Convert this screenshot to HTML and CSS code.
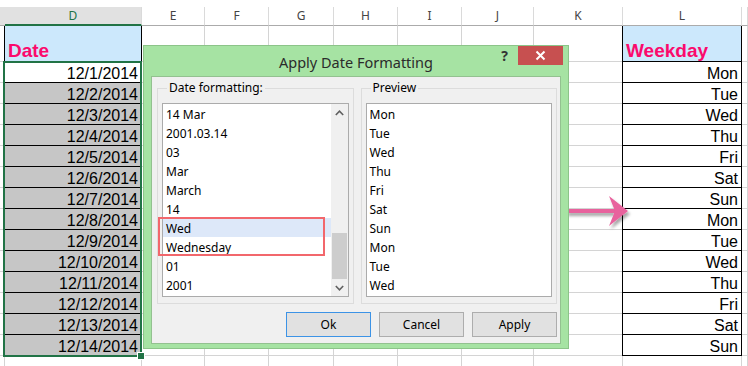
FILE: index.html
```html
<!DOCTYPE html>
<html>
<head>
<meta charset="utf-8">
<link rel="stylesheet" href="styles.css">
</head>
<body>
<div class="sheet">
  <div class="topstrip"></div>
  <div class="grid">
    <div class="col c-a"><div class="hd sel-corner"></div><div class="r1"></div><div class="rows"></div></div>
    <div class="col c-d">
      <div class="hd sel">D</div>
      <div class="head-cell">Date</div>
      <div class="cell white">12/1/2014</div>
      <div class="cell">12/2/2014</div>
      <div class="cell">12/3/2014</div>
      <div class="cell">12/4/2014</div>
      <div class="cell">12/5/2014</div>
      <div class="cell">12/6/2014</div>
      <div class="cell">12/7/2014</div>
      <div class="cell">12/8/2014</div>
      <div class="cell">12/9/2014</div>
      <div class="cell">12/10/2014</div>
      <div class="cell">12/11/2014</div>
      <div class="cell">12/12/2014</div>
      <div class="cell">12/13/2014</div>
      <div class="cell">12/14/2014</div>
      <div class="rows"></div>
    </div>
    <div class="col c-e"><div class="hd">E</div><div class="r1"></div><div class="rows"></div></div>
    <div class="col c-f"><div class="hd">F</div><div class="r1"></div><div class="rows"></div></div>
    <div class="col c-g"><div class="hd">G</div><div class="r1"></div><div class="rows"></div></div>
    <div class="col c-h"><div class="hd">H</div><div class="r1"></div><div class="rows"></div></div>
    <div class="col c-i"><div class="hd">I</div><div class="r1"></div><div class="rows"></div></div>
    <div class="col c-j"><div class="hd">J</div><div class="r1"></div><div class="rows"></div></div>
    <div class="col c-k"><div class="hd">K</div><div class="r1"></div><div class="rows"></div></div>
    <div class="col c-l">
      <div class="hd">L</div>
      <div class="head-cell">Weekday</div>
      <div class="cell white">Mon</div>
      <div class="cell white">Tue</div>
      <div class="cell white">Wed</div>
      <div class="cell white">Thu</div>
      <div class="cell white">Fri</div>
      <div class="cell white">Sat</div>
      <div class="cell white">Sun</div>
      <div class="cell white">Mon</div>
      <div class="cell white">Tue</div>
      <div class="cell white">Wed</div>
      <div class="cell white">Thu</div>
      <div class="cell white">Fri</div>
      <div class="cell white">Sat</div>
      <div class="cell white">Sun</div>
      <div class="rows"></div>
    </div>
    <div class="col c-m"><div class="hd"></div><div class="r1"></div><div class="rows"></div></div>
  </div>

  <div class="selection"><span class="handle"></span></div>

  <svg class="arrow" width="80" height="45" viewBox="0 0 80 45">
    <defs>
      <filter id="shadow" x="-20%" y="-40%" width="150%" height="190%">
        <feDropShadow dx="2" dy="3" stdDeviation="1.6" flood-color="#000" flood-opacity="0.35"/>
      </filter>
    </defs>
    <g filter="url(#shadow)" fill="#e8629d">
      <rect x="6" y="19" width="50" height="4"/>
      <polygon points="49,6 68,21 49,36 55,21"/>
    </g>
  </svg>

  <div class="dialog">
    <div class="titlebar">
      <div class="title">Apply Date Formatting</div>
      <div class="controls">
        <span class="help">?</span>
        <span class="close">
          <svg width="11" height="11" viewBox="0 0 11 11"><path d="M1.5 1.5 L9.5 9.5 M9.5 1.5 L1.5 9.5" stroke="#fff" stroke-width="2" fill="none"/></svg>
        </span>
      </div>
    </div>
    <div class="client">
      <div class="groups">
        <fieldset class="group">
          <legend>Date formatting:</legend>
          <div class="listbox">
            <ul class="items">
              <li>14 Mar</li>
              <li>2001.03.14</li>
              <li>03</li>
              <li>Mar</li>
              <li>March</li>
              <li>14</li>
              <li class="selected">Wed</li>
              <li>Wednesday</li>
              <li>01</li>
              <li>2001</li>
            </ul>
            <div class="scrollbar">
              <div class="sb-btn"><svg width="9" height="6" viewBox="0 0 9 6"><polyline points="0.8,5 4.5,1.2 8.2,5" fill="none" stroke="#606060" stroke-width="1.6"/></svg></div>
              <div class="sb-track"><div class="sb-thumb"></div></div>
              <div class="sb-btn"><svg width="9" height="6" viewBox="0 0 9 6"><polyline points="0.8,1 4.5,4.8 8.2,1" fill="none" stroke="#606060" stroke-width="1.6"/></svg></div>
            </div>
            <div class="mark"></div>
          </div>
        </fieldset>
        <fieldset class="group">
          <legend>Preview</legend>
          <div class="listbox">
            <ul class="items">
              <li>Mon</li>
              <li>Tue</li>
              <li>Wed</li>
              <li>Thu</li>
              <li>Fri</li>
              <li>Sat</li>
              <li>Sun</li>
              <li>Mon</li>
              <li>Tue</li>
              <li>Wed</li>
            </ul>
          </div>
        </fieldset>
      </div>
      <div class="buttons">
        <button class="btn default">Ok</button>
        <button class="btn">Cancel</button>
        <button class="btn">Apply</button>
      </div>
    </div>
  </div>
</div>
</body>
</html>
```
FILE: styles.css
```css
* { box-sizing: border-box; }

body {
  margin: 0;
  background: #fff;
  font-family: "Noto Sans", "DejaVu Sans", sans-serif;
}

.sheet {
  position: relative;
  width: 748px;
  height: 366px;
  overflow: hidden;
  background: #fff;
}

.topstrip { height: 7px; }

.grid {
  display: flex;
  height: 359px;
}

.col {
  display: flex;
  flex-direction: column;
  flex: none;
}

.c-a { width: 5px; }
.c-d { width: 137px; }
.c-e { width: 63px; }
.c-f { width: 64px; }
.c-g { width: 65px; }
.c-h { width: 64px; }
.c-i { width: 64px; }
.c-j { width: 72px; }
.c-k { width: 89px; }
.c-l { width: 119px; }
.c-m { flex: 1; }

.hd {
  height: 19px;
  flex: none;
  border-right: 1px solid #dadada;
  border-bottom: 1px solid #ababab;
  font-size: 12px;
  line-height: 18px;
  color: #444;
  text-align: center;
}

.hd.sel {
  background: #e1e1e1;
  color: #217346;
  border-bottom: 2px solid #217346;
}

.hd.sel-corner {
  background: #e1e1e1;
  border-right: none;
}

.r1 {
  height: 36px;
  flex: none;
  border-right: 1px solid #d4d4d4;
  border-bottom: 1px solid #d4d4d4;
}

.rows {
  flex: 1;
  border-right: 1px solid #d4d4d4;
  background: repeating-linear-gradient(to bottom, transparent 0 20px, #d4d4d4 20px 21px);
}

.head-cell {
  height: 36px;
  flex: none;
  margin-left: -1px;
  border: 1px solid #000;
  border-top: none;
  background: #cce8fc;
  color: #fb0a6c;
  font-family: "Liberation Sans", Arial, sans-serif;
  font-weight: bold;
  font-size: 19px;
  line-height: 19px;
  display: flex;
  align-items: flex-end;
  padding: 0 0 1px 3px;
}

.cell {
  height: 21px;
  flex: none;
  margin-left: -1px;
  border: 1px solid #000;
  border-top: none;
  background: #c6c6c6;
  color: #000;
  font-family: "Liberation Sans", Arial, sans-serif;
  font-size: 16px;
  line-height: 16px;
  display: flex;
  align-items: flex-end;
  justify-content: flex-end;
  padding-right: 3px;
}

.cell.white { background: #fff; }

.selection {
  position: absolute;
  left: 3px;
  top: 61px;
  width: 139px;
  height: 296px;
  border: 2px solid #217346;
}

.handle {
  position: absolute;
  right: -5px;
  bottom: -5px;
  width: 8px;
  height: 8px;
  background: #217346;
  border: 1px solid #fff;
}

.arrow {
  position: absolute;
  left: 560px;
  top: 190px;
}

/* dialog */
.dialog {
  position: absolute;
  left: 143px;
  top: 45px;
  width: 426px;
  height: 304px;
  background: #a6e3a3;
  border: 1px solid #8cc489;
  display: flex;
  flex-direction: column;
}

.titlebar {
  height: 30px;
  flex: none;
  display: grid;
  grid-template-columns: 1fr auto 1fr;
  align-items: center;
}

.title {
  grid-column: 2;
  font-size: 14.5px;
  color: #2b2b2b;
  padding-top: 1px;
}

.controls {
  grid-column: 3;
  justify-self: end;
  align-self: start;
  display: flex;
  align-items: center;
  gap: 10px;
  margin-right: 5px;
}

.help {
  font-weight: bold;
  font-size: 14px;
  color: #333;
  line-height: 19px;
}

.close {
  width: 45px;
  height: 19px;
  background: #c75050;
  display: flex;
  align-items: center;
  justify-content: center;
}

.client {
  flex: 1;
  margin: 0 7px 4px;
  background: #f0f0f0;
  border: 1px solid #93c190;
  padding: 3px 3px 5px 5px;
  display: flex;
  flex-direction: column;
}

.groups {
  display: grid;
  grid-template-columns: 1fr 1fr;
  column-gap: 7px;
}

.group {
  margin: 0;
  min-width: 0;
  padding: 7px 4px 6px;
  border: 1px solid #dcdcdc;
}

.group legend {
  padding: 0 2px;
  margin-left: 5px;
  font-size: 12px;
  line-height: 16px;
  color: #000;
}

.listbox {
  position: relative;
  height: 194px;
  border: 1px solid #ababab;
  background: #fff;
  display: flex;
}

.items {
  flex: 1;
  margin: 0;
  padding: 0;
  list-style: none;
}

.items li {
  height: 19px;
  line-height: 19px;
  padding: 1px 0 0 3px;
  font-size: 12px;
  color: #000;
}

.items li.selected { background: #dde8f9; }

.scrollbar {
  width: 17px;
  flex: none;
  background: #f0f0f0;
  display: flex;
  flex-direction: column;
}

.sb-btn {
  height: 17px;
  flex: none;
  display: flex;
  align-items: center;
  justify-content: center;
}

.sb-track {
  flex: 1;
  display: flex;
  flex-direction: column;
  justify-content: flex-end;
  padding: 0 1px;
}

.sb-thumb {
  height: 46px;
  background: #cdcdcd;
}

.mark {
  position: absolute;
  left: -5px;
  top: 113px;
  width: 167px;
  height: 39px;
  border: 2px solid #f2676c;
}

.buttons {
  display: flex;
  justify-content: flex-end;
  gap: 8px;
  margin-top: 8px;
}

.btn {
  width: 85px;
  height: 25px;
  margin: 0;
  padding: 0;
  border: 1px solid #adadad;
  background: #e1e1e1;
  font-family: "Noto Sans", "DejaVu Sans", sans-serif;
  font-size: 12px;
  color: #000;
}

.btn.default { border-color: #3c93e6; }
```
